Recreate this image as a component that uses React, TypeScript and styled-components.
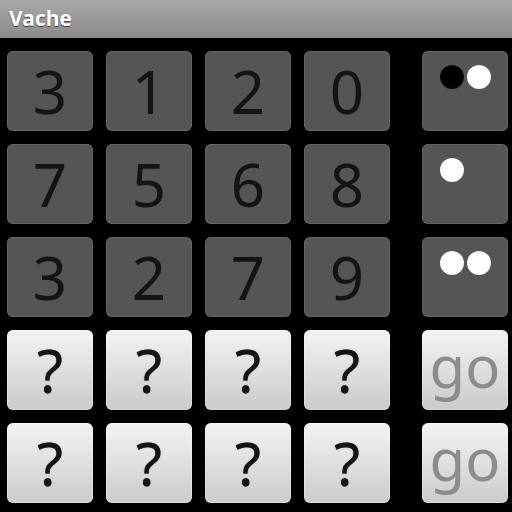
import React from "react";
import styled, { createGlobalStyle } from "styled-components";

const Global = createGlobalStyle`
  html, body { margin: 0; padding: 0; background: #000; }
  body { width: 512px; height: 512px; overflow: hidden; font-family: "Noto Sans", "Open Sans", sans-serif; }
`;

const Screen = styled.div`
  width: 512px;
  height: 512px;
  background: #000;
  display: flex;
  flex-direction: column;
`;

const TitleBar = styled.div`
  height: 38px;
  box-sizing: border-box;
  padding-left: 9px;
  padding-bottom: 2px;
  display: flex;
  align-items: center;
  background: linear-gradient(#a9a9a9, #8b8b8b);
  color: #fff;
  font-family: "Noto Sans", "Open Sans", sans-serif;
  font-weight: 700;
  font-size: 21px;
  text-shadow: 0 1px 1px rgba(0, 0, 0, 0.6);
`;

const Board = styled.div`
  display: flex;
  gap: 32px;
  padding: 13px 0 0 7px;
`;

const Grid = styled.div`
  display: grid;
  grid-template-columns: repeat(4, 86px);
  grid-auto-rows: 80px;
  gap: 13px;
`;

const Side = styled.div`
  display: grid;
  grid-template-columns: 86px;
  grid-auto-rows: 80px;
  gap: 13px;
`;

const Key = styled.div<{ $light?: boolean; $muted?: boolean }>`
  border-radius: 6px;
  display: flex;
  align-items: center;
  justify-content: center;
  font-family: "Noto Sans", "Open Sans", sans-serif;
  font-size: ${(p) => (p.$muted ? "58px" : "60px")};
  line-height: 1;
  color: ${(p) => (p.$muted ? "#8c8c8c" : "#141414")};
  background: ${(p) => (p.$light ? "linear-gradient(#f3f3f3, #cbcbcb)" : "#555555")};
  box-shadow: inset 0 0 0 1px ${(p) => (p.$light ? "rgba(255,255,255,0.3)" : "rgba(110,110,110,0.6)")};
  text-shadow: ${(p) => (p.$light && !p.$muted ? "0 0 1px rgba(0,0,0,0.7)" : "none")};
  padding-bottom: ${(p) => (p.$muted ? "8px" : "0")};
  box-sizing: border-box;
`;

const DotKey = styled.div`
  border-radius: 6px;
  background: #555555;
  box-shadow: inset 0 0 0 1px rgba(110, 110, 110, 0.6);
  display: flex;
  align-items: flex-start;
  gap: 3px;
  padding: 14px 0 0 18px;
  box-sizing: border-box;
`;

const Dot = styled.div<{ $black?: boolean }>`
  width: 24px;
  height: 24px;
  border-radius: 50%;
  background: ${(p) =>
    p.$black
      ? "radial-gradient(circle, #000 60%, #111 80%, #444 100%)"
      : "radial-gradient(circle, #fff 55%, #f2f2f2 75%, #bbb 100%)"};
`;

const rows = [
  ["3", "1", "2", "0"],
  ["7", "5", "6", "8"],
  ["3", "2", "7", "9"],
];

const dots: boolean[][] = [
  [true, false],
  [false],
  [false, false],
];

export default function App() {
  return (
    <Screen>
      <Global />
      <TitleBar>Vache</TitleBar>
      <Board>
        <Grid>
          {rows.flat().map((d, i) => (
            <Key key={i}>{d}</Key>
          ))}
          {Array.from({ length: 8 }).map((_, i) => (
            <Key key={"q" + i} $light>
              ?
            </Key>
          ))}
        </Grid>
        <Side>
          {dots.map((row, i) => (
            <DotKey key={i}>
              {row.map((b, j) => (
                <Dot key={j} $black={b} />
              ))}
            </DotKey>
          ))}
          <Key $light $muted>go</Key>
          <Key $light $muted>go</Key>
        </Side>
      </Board>
    </Screen>
  );
}
